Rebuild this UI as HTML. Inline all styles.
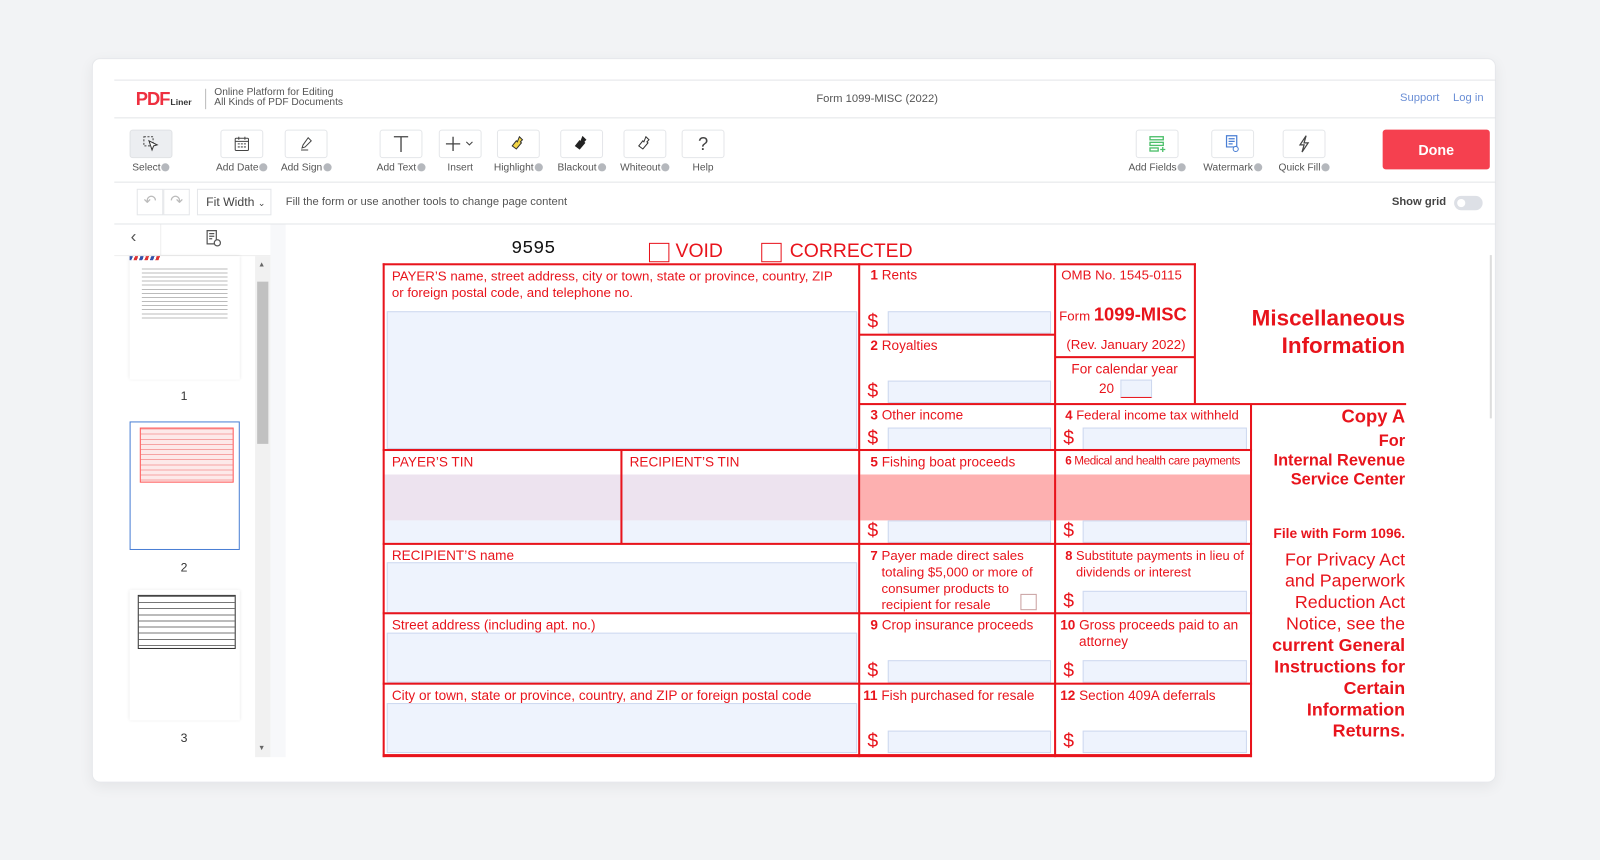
<!DOCTYPE html>
<html><head><meta charset="utf-8"><style>
*{box-sizing:border-box;margin:0;padding:0}
body{width:1600px;height:860px;overflow:hidden;background:#f2f3f5;font-family:"Liberation Sans",sans-serif}
#w{position:absolute;left:0;top:0;width:1568px;height:843px;transform:scale(1.020408);transform-origin:0 0}
.a{position:absolute}
.card{left:90px;top:57px;width:1376px;height:710px;background:#fff;border-radius:8px;box-shadow:0 4px 14px rgba(0,0,0,.06);border:1px solid #e6e8eb}
.hl{height:1px;background:#e3e5e8}
.tb{width:42px;height:28px;border:1px solid #e4e6e9;border-radius:3px;background:#fff;display:flex;align-items:center;justify-content:center}
.lb{font-size:10px;color:#555;text-align:center;width:90px;white-space:nowrap}
.q{display:inline-block;width:8px;height:8px;border-radius:50%;background:#b5b8bd;vertical-align:-1px;margin-left:1px}
.f{font-size:13.3px;color:#e8141c;white-space:nowrap}
.in{background:#eef3fd;border:1px solid #cdd8ef}
.L{background:#e8141c}
.d{font-size:19px;color:#e8141c}
.rt{text-align:right;color:#e8141c;font-weight:bold}
</style></head><body><div id="w">
<div class="a card"></div>
<div class="a hl" style="left:112px;top:78px;width:1354px"></div>
<div class="a" style="left:133px;top:87px;font-size:18px;font-weight:bold;color:#ee3040;letter-spacing:-1px">PDF</div>
<div class="a" style="left:167px;top:95px;font-size:8.5px;font-weight:bold;color:#333">Liner</div>
<div class="a" style="left:201px;top:87px;width:1px;height:20px;background:#bbb"></div>
<div class="a" style="left:210px;top:86px;font-size:10px;line-height:10px;color:#555">Online Platform for Editing<br>All Kinds of PDF Documents</div>
<div class="a" style="left:800px;top:91px;font-size:11px;color:#555">Form 1099-MISC (2022)</div>
<div class="a" style="left:1372px;top:90px;font-size:11px;color:#6b8fd6">Support</div>
<div class="a" style="left:1424px;top:90px;font-size:11px;color:#6b8fd6">Log in</div>
<div class="a hl" style="left:112px;top:115px;width:1354px"></div>
<div class="a tb" style="left:127px;top:127px;background:#eceef1;border-color:#e0e2e5"><svg width="16" height="16" viewBox="0 0 16 16"><rect x="1" y="1" width="9" height="9" fill="none" stroke="#444" stroke-dasharray="2 1.5"/><path d="M6 5l8 4-3.5 1L9 14z" fill="#fff" stroke="#333"/></svg></div>
<div class="a lb" style="left:103px;top:159px">Select<span class="q"></span></div>
<div class="a tb" style="left:216px;top:127px"><svg width="16" height="16" viewBox="0 0 16 16"><rect x="1.5" y="2.5" width="13" height="12" rx="1" fill="none" stroke="#444"/><path d="M1.5 5.5h13M5 1v3M11 1v3" stroke="#444"/><path d="M4 8h2M7 8h2M10 8h2M4 11h2M7 11h2M10 11h2" stroke="#444"/></svg></div>
<div class="a lb" style="left:192px;top:159px">Add Date<span class="q"></span></div>
<div class="a tb" style="left:279px;top:127px"><svg width="16" height="16" viewBox="0 0 16 16"><path d="M10 2l3 3-6 6-3 1 1-3z M3 14h7" fill="none" stroke="#444"/></svg></div>
<div class="a lb" style="left:255px;top:159px">Add Sign<span class="q"></span></div>
<div class="a tb" style="left:372px;top:127px"><svg width="18" height="18" viewBox="0 0 18 18"><path d="M2 2h14M9 2v15" stroke="#444" stroke-width="1.3"/></svg></div>
<div class="a lb" style="left:348px;top:159px">Add Text<span class="q"></span></div>
<div class="a tb" style="left:430px;top:127px"><svg width="30" height="16" viewBox="0 0 30 16"><path d="M8 1v14M1 8h14" stroke="#444" stroke-width="1.3"/><path d="M21 6l3 3 3-3" fill="none" stroke="#444"/></svg></div>
<div class="a lb" style="left:406px;top:159px">Insert</div>
<div class="a tb" style="left:487px;top:127px"><svg width="16" height="16" viewBox="0 0 16 16"><path d="M9 1l3 3-2 2 1 1-5 6-4-3 4-5 1 1z" fill="#f2d547" stroke="#333"/></svg></div>
<div class="a lb" style="left:463px;top:159px">Highlight<span class="q"></span></div>
<div class="a tb" style="left:549px;top:127px"><svg width="16" height="16" viewBox="0 0 16 16"><path d="M9 1l3 3-2 2 1 1-5 6-4-3 4-5 1 1z" fill="#222" stroke="#222"/></svg></div>
<div class="a lb" style="left:525px;top:159px">Blackout<span class="q"></span></div>
<div class="a tb" style="left:611px;top:127px"><svg width="16" height="16" viewBox="0 0 16 16"><path d="M9 1l3 3-2 2 1 1-5 6-4-3 4-5 1 1z" fill="#fff" stroke="#333"/></svg></div>
<div class="a lb" style="left:587px;top:159px">Whiteout<span class="q"></span></div>
<div class="a tb" style="left:668px;top:127px;font-size:18px;color:#444">?</div>
<div class="a lb" style="left:644px;top:159px">Help</div>
<div class="a tb" style="left:1113px;top:127px"><svg width="18" height="18" viewBox="0 0 18 18"><rect x="2" y="2" width="13" height="3" fill="none" stroke="#4cbf6a" stroke-width="1.3"/><rect x="2" y="7.5" width="13" height="3" fill="none" stroke="#4cbf6a" stroke-width="1.3"/><rect x="2" y="13" width="8" height="3" fill="none" stroke="#4cbf6a" stroke-width="1.3"/><path d="M12 14.5h5M14.5 12v5" stroke="#4cbf6a" stroke-width="1.3"/></svg></div>
<div class="a lb" style="left:1089px;top:159px">Add Fields<span class="q"></span></div>
<div class="a tb" style="left:1187px;top:127px"><svg width="16" height="18" viewBox="0 0 16 18"><path d="M2 1h10v11H2z M4 4h6M4 6.5h6M4 9h4" fill="none" stroke="#4a7fd4" stroke-width="1.2"/><circle cx="11" cy="14" r="2.5" fill="#fff" stroke="#4a7fd4"/></svg></div>
<div class="a lb" style="left:1163px;top:159px">Watermark<span class="q"></span></div>
<div class="a tb" style="left:1257px;top:127px"><svg width="14" height="18" viewBox="0 0 14 18"><path d="M9 1L3 10h4l-2 7 6-9H7z" fill="none" stroke="#444" stroke-width="1.2"/></svg></div>
<div class="a lb" style="left:1233px;top:159px">Quick Fill<span class="q"></span></div>
<div class="a" style="left:1355px;top:127px;width:105px;height:39px;background:#f5404f;border-radius:3px;color:#fff;font-weight:bold;font-size:14px;display:flex;align-items:center;justify-content:center">Done</div>
<div class="a hl" style="left:112px;top:178px;width:1354px"></div>
<div class="a" style="left:134px;top:185px;width:26px;height:26px;border:1px solid #e4e6e9;color:#bbb;font-size:15px;text-align:center;line-height:24px">↶</div>
<div class="a" style="left:160px;top:185px;width:26px;height:26px;border:1px solid #e4e6e9;color:#bbb;font-size:15px;text-align:center;line-height:24px">↷</div>
<div class="a" style="left:193px;top:185px;width:73px;height:26px;border:1px solid #e4e6e9;font-size:12px;color:#444;line-height:24px;padding-left:8px">Fit Width <span style="font-size:9px">⌄</span></div>
<div class="a" style="left:280px;top:192px;font-size:11px;color:#555">Fill the form or use another tools to change page content</div>
<div class="a" style="left:1364px;top:192px;font-size:11px;color:#444;font-weight:bold">Show grid</div>
<div class="a" style="left:1425px;top:192px;width:28px;height:14px;border-radius:7px;background:#dde0e6"><div class="a" style="left:3px;top:3px;width:8px;height:8px;border-radius:50%;background:#fff"></div></div>
<div class="a hl" style="left:112px;top:219px;width:1354px"></div>
<div class="a" style="left:265px;top:220px;width:15px;height:522px;background:#f7f8fa"></div>
<div class="a" style="left:1460px;top:250px;width:2px;height:160px;background:#ddd"></div>
<div class="a" style="left:112px;top:250px;width:153px;height:1px;background:#eee"></div>
<div class="a" style="left:157px;top:220px;width:1px;height:30px;background:#eee"></div>
<div class="a" style="left:128px;top:222px;font-size:17px;color:#555">‹</div>
<svg class="a" style="left:201px;top:225px" width="18" height="18" viewBox="0 0 18 18"><path d="M2 1h9v13H2z M4 4h5M4 6.5h5M4 9h3" fill="none" stroke="#555" stroke-width="1.2"/><circle cx="12" cy="13" r="3" fill="#fff" stroke="#555" stroke-width="1.2"/></svg>
<div class="a" style="left:250px;top:251px;width:15px;height:491px;background:#f1f1f1"></div>
<div class="a" style="left:252px;top:276px;width:11px;height:159px;background:#c1c1c1"></div>
<div class="a" style="left:253px;top:256px;font-size:7px;color:#666">▲</div>
<div class="a" style="left:253px;top:730px;font-size:7px;color:#666">▼</div>
<div class="a" style="left:127px;top:251px;width:108px;height:121px;background:#fff;box-shadow:0 0 3px rgba(0,0,0,.1)">
 <div class="a" style="left:0;top:0;width:30px;height:4px;background:repeating-linear-gradient(110deg,#3452a8 0 3px,#fff 3px 5px,#d33 5px 8px,#fff 8px 10px)"></div>
 <div class="a" style="left:12px;top:12px;width:84px;height:50px;background:repeating-linear-gradient(#bbb 0 1px,#fff 1px 4px)"></div>
</div>
<div class="a" style="left:177px;top:381px;font-size:12px;color:#333">1</div>
<div class="a" style="left:127px;top:413px;width:108px;height:126px;background:#fff;border:1.5px solid #4a7fd4">
 <div class="a" style="left:9px;top:5px;width:92px;height:54px;border:1px solid #f55;background:repeating-linear-gradient(#f6a3a3 0 1px,#fde9e9 1px 5px)"></div>
</div>
<div class="a" style="left:177px;top:549px;font-size:12px;color:#333">2</div>
<div class="a" style="left:127px;top:578px;width:108px;height:128px;background:#fff;box-shadow:0 0 3px rgba(0,0,0,.1)">
 <div class="a" style="left:8px;top:5px;width:96px;height:53px;border:1px solid #333;background:repeating-linear-gradient(#777 0 1px,#fff 1px 6px)"></div>
</div>
<div class="a" style="left:177px;top:716px;font-size:12px;color:#333">3</div>
<div class="a" style="left:501px;top:234px;font-size:18px;font-family:'Liberation Mono',monospace;color:#111">9595</div>
<div class="a" style="left:636px;top:238px;width:20px;height:19px;border:1px solid #e8141c"></div>
<div class="a" style="left:662px;top:236px;font-size:19px;color:#e8141c">VOID</div>
<div class="a" style="left:746px;top:238px;width:20px;height:19px;border:1px solid #e8141c"></div>
<div class="a" style="left:774px;top:236px;font-size:19px;color:#e8141c">CORRECTED</div>
<div class="a in" style="left:379px;top:305px;width:461px;height:135px"></div>
<div class="a" style="left:377px;top:465px;width:465px;height:45px;background:#ede3ef"></div>
<div class="a" style="left:377px;top:510px;width:465px;height:23px;background:#eef3fd"></div>
<div class="a" style="left:609px;top:465px;width:1px;height:68px;background:#c8d4ee"></div>
<div class="a" style="left:843px;top:465px;width:383px;height:45px;background:#fdb0b0"></div>
<div class="a in" style="left:379px;top:551px;width:461px;height:50px"></div>
<div class="a in" style="left:379px;top:620px;width:461px;height:49px"></div>
<div class="a in" style="left:379px;top:689px;width:461px;height:49px"></div>
<div class="a in" style="left:870px;top:305px;width:160px;height:22px"></div>
<div class="a in" style="left:870px;top:373px;width:160px;height:22px"></div>
<div class="a in" style="left:870px;top:419px;width:160px;height:22px"></div>
<div class="a in" style="left:1061px;top:419px;width:161px;height:22px"></div>
<div class="a in" style="left:870px;top:510px;width:160px;height:22px"></div>
<div class="a in" style="left:1061px;top:510px;width:161px;height:22px"></div>
<div class="a in" style="left:1061px;top:579px;width:161px;height:22px"></div>
<div class="a in" style="left:870px;top:647px;width:160px;height:22px"></div>
<div class="a in" style="left:1061px;top:647px;width:161px;height:22px"></div>
<div class="a in" style="left:870px;top:716px;width:160px;height:22px"></div>
<div class="a in" style="left:1061px;top:716px;width:161px;height:22px"></div>
<div class="a in" style="left:1098px;top:372px;width:31px;height:18px;border-bottom:1px solid #e8141c"></div>
<div class="a" style="left:1000px;top:582px;width:16px;height:16px;border:1px solid #c9a0a0;background:#fff"></div>
<div class="a L" style="left:375px;top:258px;width:797px;height:2px"></div>
<div class="a L" style="left:375px;top:258px;width:2px;height:484px"></div>
<div class="a L" style="left:841px;top:258px;width:2px;height:484px"></div>
<div class="a L" style="left:1033px;top:258px;width:2px;height:484px"></div>
<div class="a L" style="left:1170px;top:258px;width:2px;height:138px"></div>
<div class="a L" style="left:1225px;top:396px;width:2px;height:346px"></div>
<div class="a L" style="left:608px;top:441px;width:2px;height:92px"></div>
<div class="a L" style="left:842px;top:327px;width:192px;height:2px"></div>
<div class="a L" style="left:1034px;top:349px;width:137px;height:2px"></div>
<div class="a L" style="left:842px;top:395px;width:536px;height:2px"></div>
<div class="a L" style="left:375px;top:440px;width:852px;height:2px"></div>
<div class="a L" style="left:375px;top:532px;width:852px;height:2px"></div>
<div class="a L" style="left:375px;top:600px;width:852px;height:2px"></div>
<div class="a L" style="left:375px;top:669px;width:852px;height:2px"></div>
<div class="a L" style="left:375px;top:739px;width:852px;height:3px"></div>
<div class="a f" style="left:384px;top:263px;line-height:16px;font-size:13px">PAYER’S name, street address, city or town, state or province, country, ZIP<br>or foreign postal code, and telephone no.</div>
<div class="a f" style="left:384px;top:445px">PAYER’S TIN</div>
<div class="a f" style="left:617px;top:445px">RECIPIENT’S TIN</div>
<div class="a f" style="left:384px;top:537px">RECIPIENT’S name</div>
<div class="a f" style="left:384px;top:605px">Street address (including apt. no.)</div>
<div class="a f" style="left:384px;top:674px">City or town, state or province, country, and ZIP or foreign postal code</div>
<div class="a f" style="left:853px;top:262px"><b>1</b> Rents</div>
<div class="a f" style="left:853px;top:331px"><b>2</b> Royalties</div>
<div class="a f" style="left:853px;top:399px"><b>3</b> Other income</div>
<div class="a f" style="left:1044px;top:399px;font-size:12.8px"><b>4</b> Federal income tax withheld</div>
<div class="a f" style="left:853px;top:445px"><b>5</b> Fishing boat proceeds</div>
<div class="a f" style="left:1044px;top:446px;font-size:11.5px;letter-spacing:-.4px"><b>6</b> Medical and health care payments</div>
<div class="a f" style="left:853px;top:537px;line-height:16px;font-size:13px"><b>7</b> Payer made direct sales<br>&nbsp;&nbsp;&nbsp;totaling $5,000 or more of<br>&nbsp;&nbsp;&nbsp;consumer products to<br>&nbsp;&nbsp;&nbsp;recipient for resale</div>
<div class="a f" style="left:1044px;top:537px;line-height:16px;font-size:12.6px"><b>8</b> Substitute payments in lieu of<br>&nbsp;&nbsp;&nbsp;dividends or interest</div>
<div class="a f" style="left:853px;top:605px"><b>9</b> Crop insurance proceeds</div>
<div class="a f" style="left:1039px;top:605px;line-height:16px"><b>10</b> Gross proceeds paid to an<br>&nbsp;&nbsp;&nbsp;&nbsp;&nbsp;attorney</div>
<div class="a f" style="left:846px;top:674px"><b>11</b> Fish purchased for resale</div>
<div class="a f" style="left:1039px;top:674px"><b>12</b> Section 409A deferrals</div>
<div class="a d" style="left:850px;top:305px">$</div>
<div class="a d" style="left:850px;top:373px">$</div>
<div class="a d" style="left:850px;top:419px">$</div>
<div class="a d" style="left:1042px;top:419px">$</div>
<div class="a d" style="left:850px;top:510px">$</div>
<div class="a d" style="left:1042px;top:510px">$</div>
<div class="a d" style="left:1042px;top:579px">$</div>
<div class="a d" style="left:850px;top:647px">$</div>
<div class="a d" style="left:1042px;top:647px">$</div>
<div class="a d" style="left:850px;top:716px">$</div>
<div class="a d" style="left:1042px;top:716px">$</div>
<div class="a f" style="left:1040px;top:262px;font-size:13px">OMB No. 1545-0115</div>
<div class="a f" style="left:1038px;top:298px;font-size:13px">Form <b style="font-size:18px">1099-MISC</b></div>
<div class="a f" style="left:1045px;top:330px;font-size:13px">(Rev. January 2022)</div>
<div class="a f" style="left:1050px;top:354px">For calendar year</div>
<div class="a f" style="left:1077px;top:373px">20</div>
<div class="a rt" style="left:1180px;top:298px;width:197px;font-size:22px;line-height:27px">Miscellaneous<br>Information</div>
<div class="a rt" style="left:1230px;top:397px;width:147px;font-size:18px;line-height:22px">Copy A</div>
<div class="a rt" style="left:1230px;top:423px;width:147px;font-size:16px;line-height:19px">For<br>Internal Revenue<br>Service Center</div>
<div class="a rt" style="left:1228px;top:515px;width:149px;font-size:13.5px">File with Form 1096.</div>
<div class="a" style="left:1230px;top:538px;width:147px;font-size:17.5px;line-height:21px;color:#e8141c;text-align:right">For Privacy Act<br>and Paperwork<br>Reduction Act<br>Notice, see the</div>
<div class="a rt" style="left:1226px;top:622px;width:151px;font-size:17.5px;line-height:21px">current General<br>Instructions for<br>Certain<br>Information<br>Returns.</div>
</div></body></html>
